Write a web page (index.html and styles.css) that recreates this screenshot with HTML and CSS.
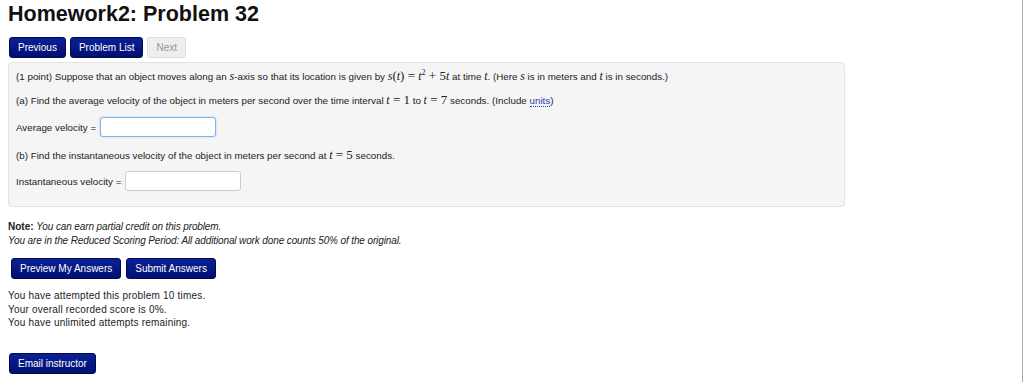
FILE: index.html
```html
<!DOCTYPE html>
<html>
<head>
<meta charset="utf-8">
<link rel="stylesheet" href="styles.css">
</head>
<body>
<h1 class="title">Homework2: Problem 32</h1>
<div class="nav">
  <span class="btn">Previous</span>
  <span class="btn">Problem List</span>
  <span class="btn btn-disabled">Next</span>
</div>
<div class="panel">
  <p class="line">(1 point) Suppose that an object moves along an <span class="mi">s</span>-axis so that its location is given by <span class="math"><span class="mi">s</span>(<span class="mi">t</span>) = <span class="mi">t</span><sup>2</sup> + 5<span class="mi">t</span></span> at time <span class="mi">t</span>. (Here <span class="mi">s</span> is in meters and <span class="mi">t</span> is in seconds.)</p>
  <p class="line">(a) Find the average velocity of the object in meters per second over the time interval <span class="math"><span class="mi">t</span> = 1</span> to <span class="math"><span class="mi">t</span> = 7</span> seconds. (Include <span class="link">units</span>)</p>
  <div class="row"><span>Average velocity =</span><span class="input input-focus"></span></div>
  <p class="line line-b">(b) Find the instantaneous velocity of the object in meters per second at <span class="math"><span class="mi">t</span> = 5</span> seconds.</p>
  <div class="row"><span>Instantaneous velocity =</span><span class="input"></span></div>
</div>
<div class="note">
  <div><b>Note:</b> <i>You can earn partial credit on this problem.</i></div>
  <div><i>You are in the Reduced Scoring Period: All additional work done counts 50% of the original.</i></div>
</div>
<div class="actions">
  <span class="btn">Preview My Answers</span>
  <span class="btn">Submit Answers</span>
</div>
<div class="attempts">
  <div>You have attempted this problem 10 times.</div>
  <div>Your overall recorded score is 0%.</div>
  <div>You have unlimited attempts remaining.</div>
</div>
<div class="email">
  <span class="btn">Email instructor</span>
</div>
<div class="edge"></div>
</body>
</html>
```
FILE: styles.css
```css
body {
  margin: 0 8px;
  font-family: "Liberation Sans", Arial, sans-serif;
  font-size: 10px;
  color: #222;
  background: #fff;
}
.title {
  margin: 0;
  padding-top: 1px;
  font-size: 21.5px;
  line-height: 26px;
  font-weight: bold;
  color: #111;
}
.nav {
  margin-top: 10px;
  display: flex;
  gap: 4px;
  padding-left: 1px;
}
.btn {
  display: inline-flex;
  align-items: center;
  height: 21px;
  box-sizing: border-box;
  padding: 0 8px;
  color: #fff;
  font-size: 10px;
  background: linear-gradient(#0b2096, #001070);
  border: 1px solid #000b55;
  border-radius: 3px;
}
.btn-disabled {
  background: #eeeeee;
  border-color: #dcdcdc;
  color: #999;
}
.panel {
  margin-top: 4px;
  width: 837px;
  box-sizing: border-box;
  background: #f5f5f5;
  border: 1px solid #e3e3e3;
  border-radius: 4px;
  padding: 6px 7px 15px;
  font-size: 9.8px;
}
.line {
  margin: 0 0 10px;
  height: 14px;
  line-height: 14px;
}
.line-b {
  margin-top: 11px;
  margin-bottom: 9px;
}
.math {
  font-family: "Liberation Serif", "Times New Roman", serif;
  font-size: 13px;
  line-height: 1;
}
.mi {
  font-family: "Liberation Serif", "Times New Roman", serif;
  font-style: italic;
  font-size: 12px;
  line-height: 1;
}
sup {
  font-size: 8px;
  line-height: 0;
}
.link {
  color: #1a3fb5;
  border-bottom: 1px dotted #1a3fb5;
}
.row {
  display: flex;
  align-items: center;
  gap: 4px;
  height: 20px;
}
.input {
  display: inline-block;
  width: 116px;
  height: 20px;
  box-sizing: border-box;
  background: #fff;
  border: 1px solid #ccc;
  border-radius: 3px;
}
.input-focus {
  border-color: #7fb3ec;
  box-shadow: 0 0 2px rgba(102, 175, 233, 0.6);
}
.note {
  margin-top: 13px;
  line-height: 14px;
}
.note i {
  letter-spacing: -0.12px;
}
.actions {
  margin-top: 10px;
  display: flex;
  gap: 5px;
  padding-left: 3px;
}
.attempts {
  margin-top: 10px;
  line-height: 13.5px;
  letter-spacing: 0.2px;
}
.email {
  margin-top: 23px;
  padding-left: 1px;
  display: flex;
}
.edge {
  position: fixed;
  top: 0;
  right: 1px;
  width: 1px;
  height: 100%;
  background: #aaa;
}
```
